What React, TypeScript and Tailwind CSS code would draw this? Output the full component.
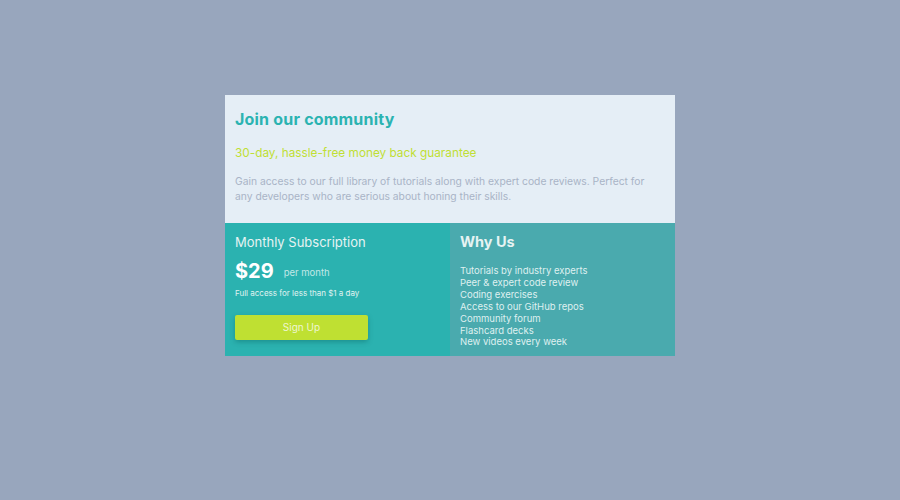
export default function App() {
  return (
    <div
      className="w-full h-[500px] bg-[#98a6bd] flex justify-center pt-[95px]"
      style={{ fontFamily: "Inter, 'Noto Sans', sans-serif" }}
    >
      <div className="w-[450px] h-[261px] flex flex-col">
        <div className="bg-[#e5eef6] h-[128px] px-[10px] pt-[12px]">
          <h1 className="text-[16px] leading-[24px] font-bold text-[#2bb3b1] tracking-[0.2px]">Join our community</h1>
          <p className="mt-[14px] text-[11.8px] leading-[16px] text-[#c0df34]">30-day, hassle-free money back guarantee</p>
          <p className="mt-[13px] max-w-[416px] text-[10.3px] leading-[15px] text-[#a9b4c6]">
            Gain access to our full library of tutorials along with expert code reviews. Perfect for any developers who are serious about honing their skills.
          </p>
        </div>
        <div className="flex h-[133px]">
          <div className="w-1/2 bg-[#2bb2b0] px-[10px] pt-[10px]">
            <h2 className="text-[13px] leading-[18px] text-[#e6f3f3]">Monthly Subscription</h2>
            <div className="flex items-center mt-[8px]">
              <span className="text-[20px] leading-[24px] font-bold text-white">$29</span>
              <span className="ml-[10px] text-[9.5px] text-[#c2e8e7] mt-[4px]">per month</span>
            </div>
            <p className="mt-[4px] text-[8px] leading-[12px] text-[#e0f2f1]">Full access for less than $1 a day</p>
            <button className="mt-[16px] w-[133px] h-[25px] bg-[#bfe032] rounded-[2px] text-[10px] text-[#eef6d2] shadow-[0_2px_5px_rgba(0,80,80,0.35)]">
              Sign Up
            </button>
          </div>
          <div className="w-1/2 bg-[#4aaaae] px-[10px] pt-[10px]">
            <h2 className="text-[14.5px] leading-[18px] font-bold text-[#e6f3f3]">Why Us</h2>
            <ul className="mt-[14px] text-[9.5px] leading-[11.9px] text-[#dff0f0]">
              <li>Tutorials by industry experts</li>
              <li>Peer &amp; expert code review</li>
              <li>Coding exercises</li>
              <li>Access to our GitHub repos</li>
              <li>Community forum</li>
              <li>Flashcard decks</li>
              <li>New videos every week</li>
            </ul>
          </div>
        </div>
      </div>
    </div>
  );
}
